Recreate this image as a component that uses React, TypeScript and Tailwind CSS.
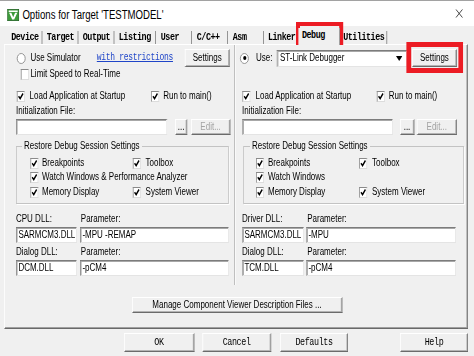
import React from 'react';

// Keil "Options for Target" dialog, Debug tab.
// The screenshot is squeezed horizontally, so the dialog is laid out at
// 593px and scaled to 80% on the x axis.

const MONO = "font-['Liberation_Mono','DejaVu_Sans_Mono',monospace]";

const Check = ({ checked = true }: { checked?: boolean }) => (
  <span className="relative inline-block h-[11px] w-[10px] shrink-0 border border-[#8a8a8a] border-b-[#dcdcdc] border-r-[#dcdcdc] bg-white">
    {checked && (
      <svg viewBox="0 0 8 9" className="absolute left-0 top-0 h-[9px] w-[8px]">
        <path d="M1.2 4.2 L3.2 6.6 L6.8 1.6" fill="none" stroke="#000" strokeWidth="1.7" />
      </svg>
    )}
  </span>
);

const Radio = ({ on = false }: { on?: boolean }) => (
  <span className="relative inline-flex h-[11px] w-[11px] shrink-0 items-center justify-center rounded-full border border-[#8a8a8a] bg-white">
    {on && <span className="h-[4px] w-[4px] rounded-full bg-black" />}
  </span>
);

const Btn = ({
  children,
  className = '',
  disabled = false,
}: {
  children: React.ReactNode;
  className?: string;
  disabled?: boolean;
}) => (
  <div
    className={`flex shrink-0 items-center justify-center border border-t-white border-l-white border-r-[#6b6b6b] border-b-[#6b6b6b] bg-[#f0f0f0] shadow-[inset_-1px_-1px_0_#b4b4b4] ${
      disabled ? 'text-[#a3a3a3]' : 'text-black'
    } ${className}`}
  >
    {children}
  </div>
);

const Edit = ({ value = '', className = '' }: { value?: string; className?: string }) => (
  <div
    className={`flex h-[16px] shrink-0 items-center border border-t-[#7c7c7c] border-l-[#7c7c7c] border-r-[#e4e4e4] border-b-[#e4e4e4] bg-white pl-[2px] shadow-[inset_1px_1px_0_#a8a8a8] ${className}`}
  >
    {value}
  </div>
);

const Row = ({ children, className = '' }: { children?: React.ReactNode; className?: string }) => (
  <div className={`flex h-[14px] items-center ${className}`}>{children}</div>
);

const tabs = [
  { label: 'Device', w: 'w-[47.5px]', pl: 'pl-[9px]' },
  { label: 'Target', w: 'w-[45px]', pl: 'pl-[6px]' },
  { label: 'Output', w: 'w-[45px]', pl: 'pl-[6px]' },
  { label: 'Listing', w: 'w-[52.5px]', pl: 'pl-[6px]' },
  { label: 'User', w: 'w-[45px]', pl: 'pl-[6px]' },
  { label: 'C/C++', w: 'w-[45px]', pl: 'pl-[6px]' },
  { label: 'Asm', w: 'w-[45px]', pl: 'pl-[6px]' },
  { label: 'Linker', w: 'w-[42.5px]', pl: 'pl-[5px]' },
  { label: 'Debug', w: 'w-[52.5px]', pl: 'pl-[5px]', active: true },
  { label: 'Utilities', w: 'w-[59px]', pl: 'pl-[4px]' },
];

const KeilIcon = () => (
  <svg viewBox="0 0 16 16" preserveAspectRatio="none" className="h-[12px] w-[15px]">
    <rect x="0.5" y="0.5" width="15" height="15" fill="#3d9b3a" stroke="#1d5e1f" />
    <rect x="2" y="2" width="12" height="2" fill="#ffffff" />
    <polygon points="2.5,5 5.5,5 8,11 10.5,5 13.5,5 9.3,14 6.7,14" fill="#ffffff" />
  </svg>
);

const RestoreGroup = ({
  className,
  legendMl,
  checkMl,
  colW,
  row2,
}: {
  className: string;
  legendMl: string;
  checkMl: string;
  colW: string;
  row2: string;
}) => (
  <fieldset className={`border border-[#c3c3c3] pb-[4px] shadow-[1px_1px_0_#ffffff] ${className}`}>
    <legend className={`${legendMl} px-[2px] leading-[12px]`}>Restore Debug Session Settings</legend>
    <Row className="mt-[4px]">
      <div className={`flex items-center ${colW} ${checkMl}`}>
        <Check />
        <span className="ml-[5px]">Breakpoints</span>
      </div>
      <Check />
      <span className="ml-[6px]">Toolbox</span>
    </Row>
    <Row>
      <div className={`flex items-center ${checkMl}`}>
        <Check />
        <span className="ml-[5px]">{row2}</span>
      </div>
    </Row>
    <Row className="mt-[1px]">
      <div className={`flex items-center ${colW} ${checkMl}`}>
        <Check />
        <span className="ml-[5px]">Memory Display</span>
      </div>
      <Check />
      <span className="ml-[6px]">System Viewer</span>
    </Row>
  </fieldset>
);

export default function App() {
  return (
    <div className="relative h-[356px] w-[474px] overflow-hidden bg-[#f0f0f0] font-['Liberation_Sans',Arial,sans-serif] text-[10px] leading-none text-black">
      <div className="relative h-[356px] w-[593px] origin-top-left scale-x-80">
        {/* title bar */}
        <div className="flex h-[26px] items-center border-t border-[#a2a2a2] bg-white">
          <div className="ml-[9px] mt-[3px]">
            <KeilIcon />
          </div>
          <span className="ml-[4px] mt-[2px] text-[12px]">Options for Target 'TESTMODEL'</span>
          <svg viewBox="0 0 10 10" className="ml-auto mr-[14px] h-[9px] w-[10px]">
            <path d="M0.5 0.5 L9.5 9.5 M9.5 0.5 L0.5 9.5" stroke="#222" strokeWidth="1" />
          </svg>
        </div>

        {/* tab strip */}
        <div className={`flex h-[18px] items-end pl-[5px] ${MONO} text-[10.5px] font-bold tracking-[-0.6px]`}>
          {tabs.map((t) =>
            t.active ? (
              <div
                key={t.label}
                className={`${t.w} ${t.pl} z-10 -mb-px flex h-[17px] items-center border-r border-r-[#8c8c8c] bg-[#f0f0f0] pb-[3px]`}
              >
                {t.label}
              </div>
            ) : (
              <div key={t.label} className={`${t.w} ${t.pl} flex h-[13px] items-center border-r border-r-[#7d7d7d]`}>
                {t.label}
              </div>
            ),
          )}
        </div>

        {/* tab page */}
        <div className="ml-[5px] h-[285px] w-[580px] border border-t-white border-l-white border-r-[#696969] border-b-[#696969] shadow-[inset_-1px_-1px_0_#a0a0a0]">
          <div className="flex h-[240px]">
            {/* left column */}
            <div className="w-[288px] border-r border-r-[#a0a0a0]">
              <div className="mt-[4px] flex h-[18px] items-center">
                <div className="ml-[15px] flex w-[100px] items-center">
                  <Radio />
                  <span className="ml-[6px]">Use Simulator</span>
                </div>
                <span className={`w-[110px] ${MONO} text-[10px] tracking-[-0.4px] text-[#1f45c8] underline`}>
                  with restrictions
                </span>
                <Btn className="h-[18px] w-[56px]">Settings</Btn>
              </div>
              <Row>
                <div className="ml-[20px] flex items-center">
                  <Check checked={false} />
                  <span className="ml-[2px]">Limit Speed to Real-Time</span>
                </div>
              </Row>
              <Row className="mt-[8px]">
                <div className="ml-[15px] flex w-[168px] items-center">
                  <Check />
                  <span className="ml-[6px]">Load Application at Startup</span>
                </div>
                <Check />
                <span className="ml-[5px]">Run to main()</span>
              </Row>
              <Row className="mt-[1px]">
                <span className="ml-[14px]">Initialization File:</span>
              </Row>
              <div className="mt-[1px] flex h-[16px]">
                <Edit className="ml-[14px] w-[189px]" />
                <Btn className="ml-[10px] w-[15px]">...</Btn>
                <Btn className="ml-[5px] w-[48.5px]" disabled>
                  Edit...
                </Btn>
              </div>
              <RestoreGroup
                className="ml-[14px] mt-[5px] w-[266px]"
                legendMl="ml-[7px]"
                checkMl="ml-[16.5px]"
                colW="w-[128.5px]"
                row2="Watch Windows & Performance Analyzer"
              />
              <Row className="mt-[8px]">
                <span className="ml-[14px] w-[81px]">CPU DLL:</span>
                <span>Parameter:</span>
              </Row>
              <div className="mt-[1px] flex">
                <Edit className="ml-[14px] w-[76px]" value="SARMCM3.DLL" />
                <Edit className="ml-[4px] w-[186px]" value="-MPU -REMAP" />
              </div>
              <Row className="mt-[2px]">
                <span className="ml-[14px] w-[81px]">Dialog DLL:</span>
                <span>Parameter:</span>
              </Row>
              <div className="mt-[1px] flex">
                <Edit className="ml-[14px] w-[76px]" value="DCM.DLL" />
                <Edit className="ml-[4px] w-[186px]" value="-pCM4" />
              </div>
            </div>

            {/* right column */}
            <div className="flex-1 border-l border-l-white">
              <div className="mt-[4px] flex h-[18px] items-center">
                <div className="ml-[5px] flex w-[46px] items-center">
                  <Radio on />
                  <span className="ml-[9px]">Use:</span>
                </div>
                <div className="flex h-[17px] w-[163px] items-center border border-t-[#7c7c7c] border-l-[#7c7c7c] border-r-[#e4e4e4] border-b-[#e4e4e4] bg-white pl-[3px] shadow-[inset_1px_1px_0_#a8a8a8]">
                  <span className="flex-1">ST-Link Debugger</span>
                  <svg viewBox="0 0 8 5" className="mr-[5px] h-[5px] w-[8px]">
                    <polygon points="0,0 8,0 4,5" fill="#000" />
                  </svg>
                </div>
                <Btn className="ml-[6px] h-[18px] w-[56px]">Settings</Btn>
              </div>
              <Row />
              <Row className="mt-[8px]">
                <div className="ml-[7.5px] flex w-[168.5px] items-center">
                  <Check />
                  <span className="ml-[7px]">Load Application at Startup</span>
                </div>
                <Check />
                <span className="ml-[5px]">Run to main()</span>
              </Row>
              <Row className="mt-[1px]">
                <span className="ml-[7.5px]">Initialization File:</span>
              </Row>
              <div className="mt-[1px] flex h-[16px]">
                <Edit className="ml-[7.5px] w-[188.5px]" />
                <Btn className="ml-[9px] w-[17.5px]">...</Btn>
                <Btn className="ml-[3.5px] w-[50px]" disabled>
                  Edit...
                </Btn>
              </div>
              <RestoreGroup
                className="ml-[9px] mt-[5px] w-[276px]"
                legendMl="ml-[8px]"
                checkMl="ml-[15px]"
                colW="w-[129px]"
                row2="Watch Windows"
              />
              <Row className="mt-[8px]">
                <span className="ml-[7.5px] w-[81.5px]">Driver DLL:</span>
                <span>Parameter:</span>
              </Row>
              <div className="mt-[1px] flex">
                <Edit className="ml-[7.5px] w-[77.5px]" value="SARMCM3.DLL" />
                <Edit className="ml-[2.5px] w-[187.5px]" value="-MPU" />
              </div>
              <Row className="mt-[2px]">
                <span className="ml-[7.5px] w-[81.5px]">Dialog DLL:</span>
                <span>Parameter:</span>
              </Row>
              <div className="mt-[1px] flex">
                <Edit className="ml-[7.5px] w-[77.5px]" value="TCM.DLL" />
                <Edit className="ml-[2.5px] w-[187.5px]" value="-pCM4" />
              </div>
            </div>
          </div>

          <div className="mt-[12px] flex">
            <Btn className="ml-[159px] h-[16px] w-[262.5px]">Manage Component Viewer Description Files ...</Btn>
          </div>
        </div>

        {/* dialog buttons */}
        <div className={`mt-[4px] flex h-[19px] ${MONO} text-[10.5px] tracking-[-0.5px]`}>
          <Btn className="ml-[155px] w-[87.5px] border-[#4d4d4d]">OK</Btn>
          <Btn className="ml-[10px] w-[86.5px]">Cancel</Btn>
          <Btn className="ml-[11px] w-[85px]">Defaults</Btn>
          <Btn className="ml-[65px] w-[85px]">Help</Btn>
        </div>

        {/* red annotation boxes */}
        <div className="absolute left-[370px] top-[22px] h-[23px] w-[59px] border-x-[5px] border-y-[4px] border-[#ec1c24]" />
        <div className="absolute left-[507.5px] top-[42px] h-[31px] w-[71.5px] border-x-[6px] border-y-[5px] border-[#ec1c24]" />
      </div>
    </div>
  );
}
